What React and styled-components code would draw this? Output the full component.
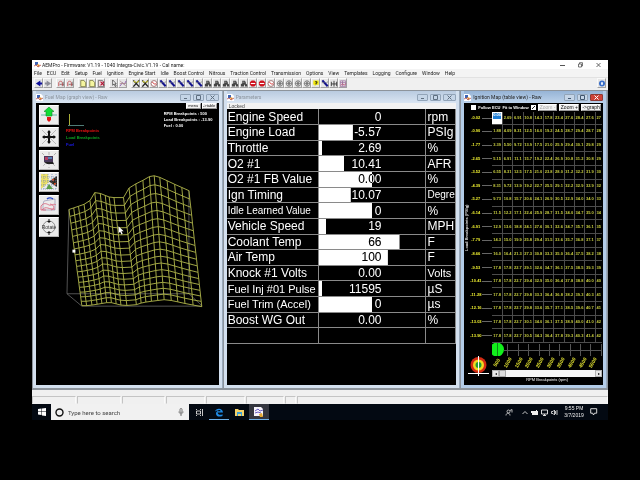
import React from "react";
import styled, { createGlobalStyle, css } from "styled-components";

const sans = `"Liberation Sans", Arial, sans-serif`;
const ui = `Roboto, "Liberation Sans", sans-serif`;

const GlobalStyle = createGlobalStyle`
  * { box-sizing: border-box; }
  body { margin: 0; background: #000; font-family: ${sans}; }
  button, input { font: inherit; margin: 0; padding: 0; }
  svg { display: block; }
`;

const Page = styled.div`
  min-height: 100vh;
  padding: 60px 5%;
  background: #000;
  display: flex;
  flex-direction: column;
`;

const Desktop = styled.div`
  flex: 1;
  display: flex;
  flex-direction: column;
  background: #f0f0f0;
  font-size: 5px;
  color: #222;
`;

const TitleBar = styled.header`
  height: 9px;
  padding: 0 7px 0 2px;
  display: flex;
  align-items: center;
  gap: 1px;
  background: #fff;
  font-family: ${ui};
`;

const AppTitle = styled.h1`
  flex: 1;
  margin: 0;
  font-size: 5px;
  line-height: 8px;
  font-weight: 400;
  color: #222;
`;

const Captions = styled.div`
  display: flex;
  gap: 13px;
`;

const CaptionButton = styled.button`
  width: 5px;
  height: 6px;
  border: 0;
  background: none;
`;

const MenuBar = styled.nav`
  height: 8px;
  padding-left: 2px;
  display: flex;
  align-items: center;
  gap: 5px;
  background: #f4f4f4;
  font-family: ${ui};
`;

const MenuItem = styled.button`
  border: 0;
  background: none;
  line-height: 7px;
  white-space: nowrap;
  color: #222;
`;

const Toolbar = styled.div`
  height: 13px;
  padding: 0 2px 2px;
  display: flex;
  align-items: center;
  gap: 4px;
  background: #f0f0f0;
  border-top: 1px solid #e2e2e2;
`;

const ToolGroup = styled.div`
  display: flex;
  ${props => props.$last && css`
    margin-left: auto;
  `}
`;

const ToolButton = styled.button`
  width: 9px;
  height: 10px;
  border: 1px solid;
  border-color: #fafafa #a2a2a2 #a2a2a2 #fafafa;
  background: #e6e6e6;
`;

const Mdi = styled.main`
  flex: 1;
  display: flex;
  gap: 1px;
  padding: 1px 1px 2px;
  background: #8d949c;
`;

const ChildWindow = styled.section`
  flex: ${props => props.$grow} 1 0;
  min-width: 0;
  display: flex;
  flex-direction: column;
  padding: 0 3px 3px;
  background: ${props => (props.$active ? "#b3cce8" : "#d3e0ef")};
  border-right: 1px solid #99a9bb;
`;

const ChildTitle = styled.header`
  height: 12px;
  display: flex;
  align-items: center;
  gap: 2px;
  font-family: ${ui};
  color: ${props => (props.$active ? "#222" : "#8b949e")};
  background: linear-gradient(
    ${props => (props.$active ? "#96b4d6, #bcd2ea" : "#b9cbe0, #dae5f2")}
  );
`;

const ChildName = styled.h2`
  flex: 1;
  margin: 0;
  font-size: 5px;
  line-height: 8px;
  font-weight: 400;
`;

const FrameButtons = styled.div`
  display: flex;
  gap: 2px;
`;

const FrameButton = styled.button`
  width: ${props => (props.$close ? 13 : 11)}px;
  height: 7px;
  display: grid;
  place-items: center;
  border: 1px solid ${props => (props.$danger ? "#8e3a34" : "#92a4b8")};
  border-radius: 1px;
  background: ${props => (props.$danger ? "#cf4338" : "#c5d5e7")};
`;

const MiniButton = styled.button`
  width: 15px;
  height: 6px;
  border: 1px solid;
  border-color: #fff #999 #999 #fff;
  background: #f2f2f2;
  font-size: 4px;
  line-height: 4px;
  color: ${props => (props.disabled ? "#aaa" : "#111")};
  white-space: nowrap;
  ${props => props.$wide && css`
    flex: 1;
    height: 7px;
    font-size: 5px;
    font-weight: 400;
    line-height: 5px;
  `}
`;

const FuelBody = styled.div`
  flex: 1;
  display: flex;
  gap: 5px;
  padding-left: 3px;
  background: #000;
`;

const ViewTools = styled.div`
  width: 20px;
  height: 134px;
  padding-top: 2px;
  display: flex;
  flex-direction: column;
  justify-content: space-between;
`;

const ViewButton = styled.button`
  width: 20px;
  height: 20px;
  border: 1px solid;
  border-color: #fff #b5b5b5 #b5b5b5 #fff;
  background: #ececec;
`;

const Canvas = styled.div`
  flex: 1;
  min-width: 0;
`;

const CanvasButtons = styled.div`
  display: flex;
  justify-content: flex-end;
  gap: 1px;
  padding-right: 2px;
`;

const CanvasInfo = styled.div`
  height: 41px;
  padding: 2px 10px 0 2px;
  display: flex;
  justify-content: space-between;
  font-size: 4px;
  font-weight: 700;
`;

const Legend = styled.ul`
  margin: 0;
  padding: 0;
  list-style: none;
  line-height: 7px;
`;

const LegendItem = styled.li`
  color: ${props => props.$color};
`;

const Readout = styled.div`
  width: 45px;
  line-height: 6px;
  color: #fff;
  white-space: nowrap;
`;

const GraphSvg = styled.svg`
  width: 100%;
`;

const LockedBar = styled.div`
  height: 6px;
  padding-left: 2px;
  background: #f2f2f2;
  line-height: 6px;
  color: #444;
`;

const ParamBody = styled.div`
  flex: 1;
  background: #000;
`;

const ParamTable = styled.table`
  width: 100%;
  height: 235px;
  table-layout: fixed;
  border-collapse: collapse;
  color: #fff;
  font-size: 12px;
  line-height: 14px;
`;

const textSizes = { small: 10, medium: 11, normal: 12 };

const ParamCell = styled.td`
  width: ${props => props.$width};
  height: 15px;
  padding: 0 0 0 1px;
  border: 1px solid #8a8a8a;
  font-size: ${props => textSizes[props.$size || "normal"]}px;
  font-weight: 400;
  text-align: left;
  white-space: nowrap;
  overflow: hidden;
  &:first-child { border-left: 0; }
  tr:first-child > & { border-top: 0; }
`;

const ValueCell = styled(ParamCell)`
  padding: 0 44px 0 0;
  text-align: right;
  background: linear-gradient(#fff, #fff) no-repeat left / ${props => props.$fill}% 100%;
`;

// white over a black cell, inverted where the bar runs under the digits
const Value = styled.span`
  color: #fff;
  mix-blend-mode: difference;
`;

const MapBody = styled.div`
  flex: 1;
  min-width: 0;
  padding-right: 1px;
  display: flex;
  flex-direction: column;
  background: #000;
`;

const MapTools = styled.div`
  height: 9px;
  padding: 0 1px 0 7px;
  display: flex;
  align-items: center;
  gap: 2px;
  color: #fff;
  font-size: 4px;
  font-weight: 700;
`;

const Tick = styled.label`
  display: flex;
  align-items: center;
  gap: 2px;
  white-space: nowrap;
  flex-direction: ${props => (props.$after ? "row-reverse" : "row")};
`;

const TickBox = styled.input`
  appearance: none;
  width: 5px;
  height: 5px;
  background: #fff;
  &:checked {
    background: #fff linear-gradient(135deg, transparent 40%, #222 40%, #222 60%, transparent 60%) center / 3px 3px no-repeat;
  }
`;

const MapRow = styled.div`
  display: flex;
  overflow: hidden;
`;

const LoadTitle = styled.div`
  width: 6px;
  display: flex;
  justify-content: center;
  align-items: center;
  writing-mode: vertical-rl;
  transform: rotate(180deg);
  font-size: 4px;
  font-weight: 700;
  line-height: 6px;
  white-space: nowrap;
  color: #ddd;
`;

const MapTable = styled.table`
  flex: 1;
  min-width: 0;
  width: 100%;
  height: 231px;
  table-layout: fixed;
  border-collapse: collapse;
  font-size: 4px;
  font-weight: 700;
  line-height: 6px;
  color: #c9ce40;
`;

const LoadHeader = styled.th`
  width: 22px;
  padding: 0 12px 0 0;
  text-align: right;
  color: #f0f030;
  background: linear-gradient(#666, #666) no-repeat right / 10px 1px;
  white-space: nowrap;
`;

const MapCell = styled.td`
  padding: 0;
  border: 1px solid #4c4c4c;
  text-align: center;
  tr:first-child > & { border-top: 0; }
  &:nth-child(2) { border-left: 0; }
  &:last-child { width: 7px; border-right: 0; }
  ${props => props.$selected && css`
    background: #fff linear-gradient(#1f7fd6, #1f7fd6) no-repeat center 1px / 8px 6px;
    color: #fff;
    vertical-align: top;
  `}
`;

const Corner = styled.div`
  width: 28px;
  padding: 13px 0 0 3px;
`;

const AxisPane = styled.div`
  flex: 1;
  min-width: 0;
`;

const RpmLabels = styled.div`
  height: 14px;
  padding-right: 3px;
  display: flex;
  font-weight: 700;
  line-height: 12px;
  color: #e0e030;
`;

const RpmLabel = styled.span`
  flex: 1;
  min-width: 0;
  display: flex;
  justify-content: center;
  transform: rotate(-60deg);
`;

const ScrollBar = styled.div`
  height: 7px;
  display: flex;
  background: #f6f6f6;
`;

const ScrollButton = styled.button`
  width: 7px;
  border: 1px solid #b4b4b4;
  background: #e9e9e9;
  line-height: 4px;
  font-size: 4px;
`;

const ScrollTrack = styled.div`
  flex: 1;
  display: flex;
`;

const ScrollThumb = styled.div`
  width: 7px;
  border: 1px solid #a8a8a8;
  background: #dedede;
`;

const AxisCaption = styled.div`
  line-height: 6px;
  text-align: center;
  color: #fff;
  font-size: 4px;
`;

const StatusBar = styled.footer`
  height: 14px;
  padding-top: 6px;
  display: flex;
  gap: 1px;
  background: #f0f0f0;
`;

const StatusCell = styled.div`
  width: ${props => props.$width}px;
  border: 1px solid;
  border-color: #c4c4c4 #fafafa #f0f0f0 #c4c4c4;
  ${props => !props.$width && css`
    flex: 1;
  `}
`;

const Taskbar = styled.footer`
  height: 16px;
  display: flex;
  background: #030912;
  color: #eee;
`;

const TaskButton = styled.button`
  width: ${props => props.$width || 20}px;
  display: grid;
  place-items: center;
  border: 0;
  background: ${props => (props.$active ? "#34363f" : "transparent")};
  ${props => props.$running && css`
    border-bottom: 1px solid #6fb1ea;
  `}
`;

const Search = styled.label`
  width: 138px;
  padding: 0 5px 0 4px;
  display: flex;
  align-items: center;
  gap: 4px;
  background: #f1f1f1;
`;

const SearchInput = styled.input`
  flex: 1;
  min-width: 0;
  border: 0;
  outline: 0;
  background: none;
  font-family: ${ui};
  font-size: 6px;
  &::placeholder { color: #444; opacity: 1; }
`;

const Tray = styled.div`
  margin-left: auto;
  padding-right: 10px;
  display: flex;
  align-items: center;
`;

const TrayIcons = styled.div`
  display: flex;
  align-items: center;
  gap: 3px;
`;

const Clock = styled.time`
  width: 32px;
  font-size: 5px;
  line-height: 7px;
  text-align: center;
`;

const MENUS = ["File", "ECU", "Edit", "Setup", "Fuel", "Ignition", "Engine Start", "Idle", "Boost Control", "Nitrous",
  "Traction Control", "Transmission", "Options", "View", "Templates", "Logging", "Configure", "Window", "Help"];

const TOOL_GROUPS = [
  ["back", "forward"],
  ["link", "link"],
  ["page", "page", "pageRed"],
  ["pick", "chart"],
  ["cross", "cross", "gauge", "pencil", "pencil", "pencil", "pencil", "pencil", "engine", "engine", "engine", "engine",
    "engine", "stop", "stop", "gauge", "wheel", "wheel", "wheel", "wheel", "help", "pencil", "truck", "table"],
];

const PARAMS = [
  { name: "Engine Speed", value: "0", unit: "rpm", fill: 0 },
  { name: "Engine Load", value: "-5.57", unit: "PSIg", fill: 32 },
  { name: "Throttle", value: "2.69", unit: "%", fill: 3 },
  { name: "O2 #1", value: "10.41", unit: "AFR", fill: 24 },
  { name: "O2 #1 FB Value", value: "0.00", unit: "%", fill: 50 },
  { name: "Ign Timing", value: "10.07", unit: "Degre", fill: 30, unitSize: "small" },
  { name: "Idle Learned Value", value: "0", unit: "%", fill: 50, size: "small" },
  { name: "Vehicle Speed", value: "19", unit: "MPH", fill: 7 },
  { name: "Coolant Temp", value: "66", unit: "F", fill: 76 },
  { name: "Air Temp", value: "100", unit: "F", fill: 65 },
  { name: "Knock #1 Volts", value: "0.00", unit: "Volts", fill: 0, unitSize: "medium" },
  { name: "Fuel Inj #01 Pulse", value: "11595", unit: "µS", fill: 3, size: "medium" },
  { name: "Fuel Trim (Accel)", value: "0", unit: "µs", fill: 50, size: "medium" },
  { name: "Boost WG Out", value: "0.00", unit: "%", fill: 0 },
  { name: "\u00a0", value: "", unit: "", fill: 0 },
];

const MAP = `-0.02 0.00 2.69 6.91 10.8 14.3 17.8 23.4 27.6 28.4 27.6 27
-0.90 1.88 4.09 8.31 12.5 16.0 19.2 24.5 28.7 29.4 28.7 28
-1.77 3.39 5.50 9.72 13.9 17.5 21.0 25.9 29.4 30.1 29.8 29
-2.65 5.15 6.91 11.1 15.7 19.2 22.4 26.9 30.8 31.2 30.8 29
-3.52 6.55 8.31 12.5 17.5 21.0 23.8 28.0 31.2 32.2 31.9 30
-4.39 8.31 9.72 13.9 19.2 22.7 25.5 29.1 32.2 32.9 32.9 32
-5.27 9.73 10.8 15.7 20.6 24.1 26.9 30.5 32.9 34.0 34.0 33
-6.14 11.5 12.2 17.1 22.4 25.9 28.7 31.5 34.0 34.7 35.0 34
-6.91 12.9 13.6 18.8 24.1 27.6 30.1 32.6 34.7 35.7 36.1 35
-7.79 14.3 15.0 19.9 25.8 29.4 31.5 33.6 35.7 36.8 37.1 37
-8.66 16.0 16.4 21.3 27.3 30.8 33.3 35.0 36.4 37.5 38.2 38
-9.53 17.8 17.8 22.7 29.1 32.6 34.7 36.1 37.5 38.5 39.3 39
-10.41 17.8 17.8 22.7 29.4 32.9 35.0 36.4 37.8 38.8 40.0 40
-11.28 17.8 17.8 22.7 29.8 33.3 36.4 36.8 38.2 39.3 40.3 41
-12.16 17.8 17.8 22.7 29.8 33.6 35.7 37.1 38.5 39.6 40.7 41
-13.03 17.8 17.8 22.7 30.1 34.0 36.1 37.5 38.9 40.0 41.0 42
-13.90 17.8 17.8 22.7 30.5 34.3 36.4 37.8 39.3 40.3 41.4 42`.split("\n").map(line => line.split(" "));

const RPMS = [500, 1000, 1500, 2000, 2500, 3000, 3500, 4000, 4500, 5000];

const TOOL_ICONS = {
  back: <path d="M1 5 6 1.5V8.500zM6 4h2v2H6z" fill="#10109a" />,
  forward: <path d="M8 5 3 1.500V8.500zM1 4h2v2H1z" fill="#8d8d98" />,
  link: (
    <g fill="none">
      <path d="M2 8V4l2-2 2 2v4M5 6h3" stroke="#c2474b" />
      <path d="M3 6h2M7 3v5" stroke="#777" />
    </g>
  ),
  page: <path d="M2 1.500h3.500L7.500 4v4.500H2z" fill="#f5f5a0" stroke="#67672d" strokeWidth=".8" />,
  pageRed: (
    <g>
      <path d="M1.500 1.500H6L7.500 4v4.500h-6z" fill="#f4d7dc" stroke="#555" strokeWidth=".8" />
      <path d="M4 3l4 4M8 3 4 7" stroke="#b01533" strokeWidth="1.200" />
    </g>
  ),
  pick: <path d="M3 1v6l1.500-1.500L6 8.500l1-.6-1.500-2.700H7z" fill="#fff" stroke="#333" strokeWidth=".8" />,
  chart: (
    <g fill="none">
      <path d="M1 8 4 4l2 2 2-4" stroke="#8a55aa" />
      <path d="M1 2l7 6M1 5h7" stroke="#a88" strokeWidth=".8" />
    </g>
  ),
  cross: (
    <g>
      <path d="M1.500 1.500l6.500 7M8 1.500l-6.500 7" stroke="#222" strokeWidth="1.600" />
      <path d="M2 2l2 2M7.500 2l-2 2" stroke="#d4cf28" strokeWidth="1.200" />
    </g>
  ),
  gauge: (
    <g>
      <circle cx="4.500" cy="5" r="3.300" fill="#fff" stroke="#8c4c4c" strokeWidth=".8" />
      <path d="M2.500 3.500 5 5.500l2 0" stroke="#c22" fill="none" />
    </g>
  ),
  pencil: (
    <g>
      <path d="M1.500 1.500 7.500 8" stroke="#14148c" strokeWidth="2.400" />
      <path d="M1 4h3M6 4l2-1" stroke="#777" strokeWidth=".8" />
    </g>
  ),
  engine: (
    <g>
      <path d="M2.500 2h3l1 1.500V5l1.500 1v2.500H5.500V6.500h-1v2H1V5.500l1.500-.5z" fill="#454545" />
      <path d="M3 3.500h2" stroke="#bbb" strokeWidth=".8" />
    </g>
  ),
  stop: (
    <g>
      <path d="M3 1.500h3L8 3.500v3L6 8.500H3L1 6.500v-3z" fill="#cf1420" />
      <path d="M2 5h5" stroke="#fff" strokeWidth="1.200" />
    </g>
  ),
  wheel: (
    <g fill="none" stroke="#777">
      <circle cx="4.500" cy="5" r="3" />
      <circle cx="4.500" cy="5" r="1" stroke="#444" />
      <path d="M1 5h7M4.500 1.500v7" strokeWidth=".6" />
    </g>
  ),
  help: (
    <g>
      <path d="M1.500 1.500h6v5h-3l-1.500 2v-2H1.500z" fill="#efe600" />
      <path d="M3.500 3h2v1.500h-1V6" stroke="#222" fill="none" />
    </g>
  ),
  truck: <path d="M1.500 3v5M4.500 2v6.500M7.500 3v5M1.500 5.500h6" stroke="#333" fill="none" />,
  table: (
    <g fill="none">
      <path d="M1.500 2h6v6.500h-6zM1.500 4h6M4 2v6" stroke="#95689a" strokeWidth=".8" />
      <path d="M2 7l2-1.500L6 7l1.500-2" stroke="#b22b5b" strokeWidth=".8" />
    </g>
  ),
  ecu: (
    <g>
      <circle cx="4.500" cy="5" r="3.400" fill="#3a6fc9" />
      <path d="M3.500 3.500h2v3h-2z" fill="#fff" />
    </g>
  ),
};

const VIEW_TOOLS = [
  {
    label: "Raise and lower",
    icon: (
      <g>
        <path d="M1 9h16" stroke="#4a9" strokeWidth=".8" />
        <path d="M9 1 14 5.500H12V10H6V5.500H4z" fill="#13dd35" stroke="#118a25" strokeWidth=".6" />
        <path d="M7 11h4v3l-2 2-2-2z" fill="#e01515" />
      </g>
    ),
  },
  {
    label: "Move",
    icon: (
      <g>
        <path d="M2 2l14 14M16 2 2 16" stroke="#999" strokeWidth=".6" />
        <path d="M9 3v12M3 9h12" stroke="#111" strokeWidth="2" />
        <path d="M9 2 7 4.500h4zM9 16l-2-2.500h4zM2 9l2.500-2v4zM16 9l-2.500-2v4z" fill="#111" />
      </g>
    ),
  },
  {
    label: "Zoom",
    icon: (
      <g>
        <path d="M2 2l14 14M16 2 2 16M9 1v16" stroke="#888" strokeWidth=".6" strokeDasharray="3 2" />
        <path d="M4 5h9v6H4z" fill="#4b3a5c" />
        <path d="M5 6h3v3H5z" fill="#b53f65" />
        <path d="M8 6h4v2H8z" fill="#5680b5" />
        <path d="M4 11h9l1 2H7z" fill="#222" />
      </g>
    ),
  },
  {
    label: "Colors",
    icon: (
      <g>
        <path d="M1 1h7l1 8-8 7z" fill="#ecdf68" />
        <path d="M17 3v11L9 8.500z" fill="#33271c" />
        <path d="M12 6h2v2h-2zM14 10h2v2h-2z" fill="#c74a28" />
        <path d="M1 4h16M1 8h16M1 12h16M1 16h16M4 1v16M8 1v16M12 1v16M16 1v16" stroke="#5b7bb5" strokeWidth=".6" strokeDasharray="1 1" />
        <path d="M9 11l4 5H6z" fill="#5b9b47" />
      </g>
    ),
  },
  {
    label: "Shape",
    icon: (
      <g fill="none">
        <path d="M4 5 15 3v11H3V8z" stroke="#88a" strokeWidth=".6" />
        <path d="M7 3c2-2 5-1 6 0" stroke="#2244c8" strokeWidth="1.400" />
        <path d="M1 10c3-4 6-2 8-1s5-2 7 0M2 14c4-5 7 0 13-1M1 10v4h5M10 8c5 1 5 5 1 6" stroke="#d96a80" strokeWidth=".9" />
      </g>
    ),
  },
  {
    label: "Rotate",
    icon: (
      <g>
        <circle cx="9" cy="9" r="6" fill="none" stroke="#777" strokeWidth=".8" />
        <path d="M9 1v3M9 14v3" stroke="#111" />
        <path d="M7 3h4L9 5zM7 15h4L9 13z" fill="#111" />
        <text x="9" y="11" fontSize="5" textAnchor="middle" fill="#333">Rotate</text>
      </g>
    ),
  },
];

// back and front edges of the fuel surface, the rows in between are interpolated
const BACK = [[69, 210], [75, 208], [81, 206], [89, 203], [95, 193], [102, 194], [108, 197], [112, 198], [124, 198], [131, 186],
  [140, 183], [149, 177], [155, 176], [162, 178], [172, 183], [181, 187], [190, 191]];
const FRONT = [[82, 307], [88, 307], [95, 306], [101, 305], [107, 304], [113, 304], [119, 306], [125, 307], [137, 306], [143, 304],
  [149, 303], [157, 302], [165, 301], [174, 302], [182, 304], [192, 306], [203, 308]];
const COLUMNS = 20;
const ROWS = 17;

const along = (edge, t) => {
  const at = t * (edge.length - 1);
  const i = Math.min(Math.floor(at), edge.length - 2);
  const f = at - i;
  return [edge[i][0] + (edge[i + 1][0] - edge[i][0]) * f, edge[i][1] + (edge[i + 1][1] - edge[i][1]) * f];
};

const meshPoint = (c, r) => {
  const [bx, by] = along(BACK, c / COLUMNS);
  const [fx, fy] = along(FRONT, c / COLUMNS);
  const depth = r / ROWS;
  const t = depth * 1.25 - depth * depth * 0.25;
  return `${(bx + (fx - bx) * t).toFixed(1)},${(by + (fy - by) * t).toFixed(1)}`;
};

function AppIcon() {
  return (
    <svg width="7" height="7" viewBox="0 0 7 7">
      <path d="M0 0h5l2 2v5H0z" fill="#fff" />
      <path d="M1 1h3v3H1z" fill="#3d63b5" />
      <path d="M3 3l3 1-2 2z" fill="#e08a26" />
      <path d="M0 5l2-1 2 2 3-2" stroke="#a33" strokeWidth=".7" fill="none" />
    </svg>
  );
}

function Frame({ title, grow, active, children }) {
  const ink = active ? "#40566f" : "#5f6f80";
  return (
    <ChildWindow $grow={grow} $active={active}>
      <ChildTitle $active={active}>
        <AppIcon />
        <ChildName>{title}</ChildName>
        <FrameButtons>
          <FrameButton aria-label="Minimize"><svg width="5" height="5"><path d="M1 3.500h3" stroke={ink} /></svg></FrameButton>
          <FrameButton aria-label="Maximize"><svg width="5" height="5"><path d="M.5.500h4v4h-4z" stroke={ink} fill="none" /></svg></FrameButton>
          <FrameButton aria-label="Close" $close $danger={active}>
            <svg width="5" height="5"><path d="M.5.500l4 4M4.500.500l-4 4" stroke={active ? "#fff" : ink} /></svg>
          </FrameButton>
        </FrameButtons>
      </ChildTitle>
      {children}
    </ChildWindow>
  );
}

function FuelMesh() {
  const lines = [];
  for (let r = 0; r <= ROWS; r++) {
    lines.push(Array.from({ length: COLUMNS + 1 }, (_, c) => meshPoint(c, r)).join(" "));
  }
  for (let c = 0; c <= COLUMNS; c++) {
    lines.push(Array.from({ length: ROWS + 1 }, (_, r) => meshPoint(c, r)).join(" "));
  }
  return (
    <GraphSvg viewBox="64 150 156 160" role="img" aria-label="Fuel surface">
      <path d="M69 210 67 295 82 307.500H203M67 295H190V191M190 295l13 12" stroke="#666" strokeWidth=".8" fill="none" />
      {lines.map((points, index) => (
        <polyline key={index} points={points} fill="none" stroke="#b4b94c" strokeWidth=".9" />
      ))}
      <path d="M72.500 250.500h3v3h-3z" fill="#fff" />
      <path d="M119 227v7l1.600-1.500 1.400 2.700 1.200-.7-1.300-2.500h2.300z" fill="#fff" />
    </GraphSvg>
  );
}

function FuelMap() {
  return (
    <Frame title="Fuel Map (graph view) - Raw" grow={183}>
      <FuelBody>
        <ViewTools>
          {VIEW_TOOLS.map(tool => (
            <ViewButton key={tool.label} aria-label={tool.label}>
              <svg width="18" height="18">{tool.icon}</svg>
            </ViewButton>
          ))}
        </ViewTools>
        <Canvas>
          <CanvasButtons>
            <MiniButton>menu</MiniButton>
            <MiniButton>-&gt;table</MiniButton>
          </CanvasButtons>
          <CanvasInfo>
            <div>
              <svg width="18" height="16"><path d="M3.500 3v12" stroke="#aaae38" /><path d="M2 14.500h16" stroke="#4f7c76" /></svg>
              <Legend>
                <LegendItem $color="#f01212">RPM Breakpoints</LegendItem>
                <LegendItem $color="#0ea022">Load Breakpoints</LegendItem>
                <LegendItem $color="#1c1cf0">Fuel</LegendItem>
              </Legend>
            </div>
            <Readout>
              <div>RPM Breakpoints : 500</div>
              <div>Load Breakpoints : -13.90</div>
              <div>Fuel : 0.00</div>
            </Readout>
          </CanvasInfo>
          <FuelMesh />
        </Canvas>
      </FuelBody>
    </Frame>
  );
}

function Parameters() {
  return (
    <Frame title="Parameters" grow={230}>
      <LockedBar>Locked</LockedBar>
      <ParamBody>
        <ParamTable>
          <tbody>
            {PARAMS.map((param, index) => (
              <tr key={index}>
                <ParamCell as="th" scope="row" $width="40%" $size={param.size}>{param.name}</ParamCell>
                <ValueCell $fill={param.fill}><Value>{param.value}</Value></ValueCell>
                <ParamCell $width="13%" $size={param.unitSize}>{param.unit}</ParamCell>
              </tr>
            ))}
          </tbody>
        </ParamTable>
      </ParamBody>
    </Frame>
  );
}

function IgnitionMap() {
  return (
    <Frame title="Ignition Map (table view) - Raw" grow={139} active>
      <MapBody>
        <MapTools>
          <Tick><TickBox type="checkbox" />Follow ECU</Tick>
          <Tick $after><TickBox type="checkbox" defaultChecked />Fit to Window</Tick>
          <MiniButton $wide disabled>Zoom -</MiniButton>
          <MiniButton $wide>Zoom +</MiniButton>
          <MiniButton $wide>-&gt;graph</MiniButton>
        </MapTools>
        <MapRow>
          <LoadTitle>Load Breakpoints (PSIg)</LoadTitle>
          <MapTable>
            <tbody>
              {MAP.map(([load, ...cells], row) => (
                <tr key={load}>
                  <LoadHeader scope="row">{load}</LoadHeader>
                  {cells.map((cell, col) => (
                    <MapCell key={col} $selected={row === 0 && col === 0}>{cell}</MapCell>
                  ))}
                </tr>
              ))}
            </tbody>
          </MapTable>
        </MapRow>
        <MapRow>
          <Corner>
            <svg width="24" height="24" viewBox="0 0 24 24">
              <circle cx="11.500" cy="9" r="8" fill="#d42a12" />
              <circle cx="11.500" cy="9" r="5.500" fill="#f0d820" />
              <circle cx="11.500" cy="9" r="3" fill="#1d9c35" />
              <path d="M11.500 0v20M1 17.500h21" stroke="#fff" />
            </svg>
          </Corner>
          <AxisPane>
            <svg width="110" height="13">
              <circle cx="5" cy="6.500" r="7" fill="#12f01c" />
              <path d="M12 7.500h98" stroke="#555" />
              <path d="M5.500 0v13" stroke="#0a8a14" />
              <path d="M15.500 1v12M26.500 1v12M36.500 1v12M47.500 1v12M57.500 1v12M67.500 1v12M78.500 1v12M88.500 1v12M98.500 1v12M109.500 1v12" stroke="#555" />
            </svg>
            <RpmLabels>
              {RPMS.map(rpm => <RpmLabel key={rpm}>{rpm}</RpmLabel>)}
            </RpmLabels>
            <ScrollBar>
              <ScrollButton aria-label="Scroll left">◂</ScrollButton>
              <ScrollTrack><ScrollThumb /></ScrollTrack>
              <ScrollButton aria-label="Scroll right">▸</ScrollButton>
            </ScrollBar>
            <AxisCaption>RPM Breakpoints (rpm)</AxisCaption>
          </AxisPane>
        </MapRow>
      </MapBody>
    </Frame>
  );
}

function WindowsTaskbar() {
  return (
    <Taskbar>
      <TaskButton aria-label="Start" $width={19}>
        <svg width="8" height="8"><path d="M0 1l3.500-.5v3H0zM4 .500 8 0v3.500H4zM0 4h3.500v3L0 6.500zM4 4h4v4l-4-.5z" fill="#fff" /></svg>
      </TaskButton>
      <Search>
        <svg width="9" height="9"><circle cx="4.500" cy="4.500" r="3.500" fill="none" stroke="#111" strokeWidth="1.400" /></svg>
        <SearchInput type="text" aria-label="Search" placeholder="Type here to search" />
        <svg width="6" height="8" fill="none" stroke="#555" strokeWidth=".8"><rect x="2" y=".5" width="2" height="4" rx="1" /><path d="M1 3.500c0 3 4 3 4 0M3 6v2" /></svg>
      </Search>
      <TaskButton aria-label="Task view">
        <svg width="7" height="7" fill="none" stroke="#ddd" strokeWidth=".9"><path d="M.5 2h4v3h-4zM.5 0v1M4.500 0v1M.5 6v1M4.500 6v1M6.500 0v7" /></svg>
      </TaskButton>
      <TaskButton aria-label="Edge" $running>
        <svg width="10" height="10"><path d="M1 4.500C1.500 1 8.500 0 9 5.500H3.500C4 8.500 7 8 8.500 7.200V9C3 11 1 7.500 2.500 5 3 4 4 3.500 4.500 3.200 2.500 3.300 1.500 4 1 4.500zM3.600 4.200h3C6.500 2.500 4 2.500 3.600 4.200z" fill="#1f8ce8" fillRule="evenodd" /></svg>
      </TaskButton>
      <TaskButton aria-label="File Explorer">
        <svg width="9" height="8"><path d="M0 1h3l1 1h5v6H0z" fill="#f4d26a" /><path d="M2 4h5v4H6V6H3v2H2z" fill="#3aa0d8" /></svg>
      </TaskButton>
      <TaskButton aria-label="AEMPro" $active $running>
        <svg width="10" height="10"><path d="M0 0h7l2 2v7H0z" fill="#f6f4fb" /><path d="M1 4l3-2 2 2 3-1M1 6l3-1 3 1" stroke="#6a5ec0" fill="none" /><path d="M5 7l3-1 1 4H6z" fill="#e3a62f" /></svg>
      </TaskButton>
      <Tray>
        <TrayIcons>
          <svg width="8" height="7" fill="none" stroke="#ddd" strokeWidth=".8"><circle cx="3.500" cy="2.500" r="1.500" /><path d="M1 6.500c0-3 4-3 4 0M5 1.500 7 .500v3" /></svg>
          <svg width="12" height="7" fill="none" stroke="#ddd" strokeWidth=".9"><path d="M6.500 5 9 2.500 11.500 5" /></svg>
          <svg width="7" height="7"><path d="M0 2h5V1h1v1h1v4H1V4H0z" fill="#eee" /></svg>
          <svg width="7" height="7" fill="none" stroke="#eee" strokeWidth=".9"><path d="M.5 1h6v4h-6zM3.500 5v1.500M2 6.500h3" /></svg>
          <svg width="7" height="7" fill="none" stroke="#eee" strokeWidth=".8"><path d="M.5 2.500H2L3.500 1v5L2 4.500H.5zM4.500 2v3M6 1v5" /></svg>
        </TrayIcons>
        <Clock>9:55 PM<br />3/7/2019</Clock>
        <svg width="8" height="8" fill="none" stroke="#eee" strokeWidth=".9"><path d="M.7.700h6v4.500H4.500L3.500 7 2.700 5.200h-2z" /></svg>
      </Tray>
    </Taskbar>
  );
}

export default function App() {
  return (
    <Page>
      <GlobalStyle />
      <Desktop>
        <TitleBar>
          <AppIcon />
          <AppTitle>AEMPro - Firmware: V1.19 - 1040 Integra-Civic.V1.19 - Cal name:</AppTitle>
          <Captions>
            <CaptionButton aria-label="Minimize"><svg width="5" height="6"><path d="M0 3.500h5" stroke="#555" /></svg></CaptionButton>
            <CaptionButton aria-label="Restore"><svg width="5" height="6" fill="none" stroke="#555" strokeWidth=".8"><path d="M.5 2h3v3h-3zM1.500 2V.700h3V4h-1" /></svg></CaptionButton>
            <CaptionButton aria-label="Close"><svg width="5" height="6"><path d="M.5 1l4 4M4.500 1l-4 4" stroke="#444" strokeWidth=".8" /></svg></CaptionButton>
          </Captions>
        </TitleBar>
        <MenuBar>
          {MENUS.map(name => <MenuItem key={name}>{name}</MenuItem>)}
        </MenuBar>
        <Toolbar>
          {TOOL_GROUPS.map((group, index) => (
            <ToolGroup key={index}>
              {group.map((name, i) => (
                <ToolButton key={i} aria-label={name}><svg width="8" height="9" viewBox="0 0 9 10">{TOOL_ICONS[name]}</svg></ToolButton>
              ))}
            </ToolGroup>
          ))}
          <ToolGroup $last>
            <ToolButton aria-label="ecu"><svg width="8" height="9" viewBox="0 0 9 10">{TOOL_ICONS.ecu}</svg></ToolButton>
          </ToolGroup>
        </Toolbar>
        <Mdi>
          <FuelMap />
          <Parameters />
          <IgnitionMap />
        </Mdi>
        <StatusBar>
          {[44, 44, 43, 39, 39, 38, 11].map((width, index) => <StatusCell key={index} $width={width} />)}
          <StatusCell />
        </StatusBar>
        <WindowsTaskbar />
      </Desktop>
    </Page>
  );
}
